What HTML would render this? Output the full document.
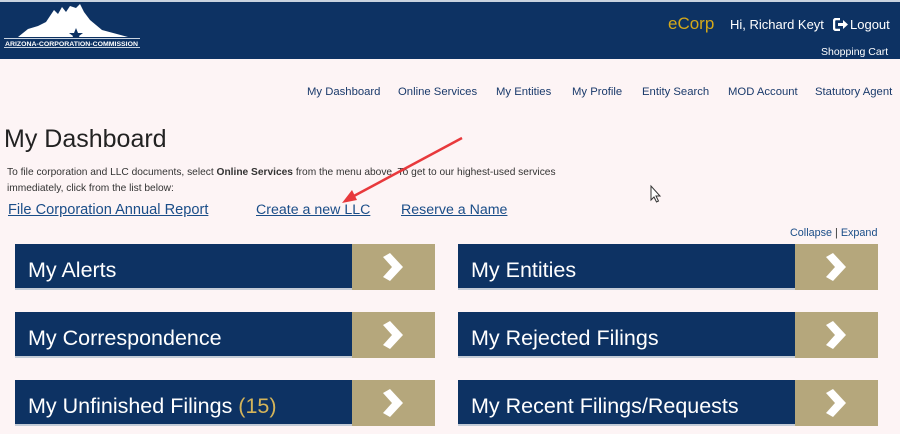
<!DOCTYPE html>
<html><head><meta charset="utf-8"><style>
*{margin:0;padding:0;box-sizing:border-box}
body{width:900px;height:434px;overflow:hidden;background:#fdf4f5;font-family:"Liberation Sans",sans-serif;position:relative}
.hdr{position:absolute;left:0;top:0;width:900px;height:59px;background:#0d3263;border-top:2px solid #c9d3df}
.abs{position:absolute;white-space:nowrap}
.nav{top:86px;font-size:11.3px;color:#1a3a6b}
.tile{position:absolute;height:46px;background:#0d3263;color:#fff;font-size:21.5px;line-height:52px;padding-left:13px;border-bottom:2px solid #c3cbd6}
.tile .g{position:absolute;right:0;top:0;width:83px;height:46px;background:#b5a77c}
.tile svg{position:absolute;left:29px;top:9px}
.lnk{top:202px;font-size:14.6px;color:#1a4d88;text-decoration:underline}
</style></head><body>
<div class="hdr">
<svg class="abs" style="left:4px;top:2px" width="136" height="46" viewBox="0 0 136 46">
<path d="M14 33 L24 25 L34 22 L42 18 L50 6 L54 10 L58 3 L62 8 L66 2 L72 4 L76 0 L80 8 L86 16 L98 26 L124 33 Z" fill="#fff"/>
<path d="M72 24 l2 5 5 0 -4 3 2 5 -5 -3 -5 3 2 -5 -4 -3 5 0z" fill="#0d3263"/>
<rect x="0" y="34" width="136" height="1" fill="#c9d3df"/>
<rect x="0" y="43" width="136" height="1" fill="#c9d3df"/>
<text x="1" y="42" font-size="6.6" fill="#fff" font-family="Liberation Sans" font-weight="bold" textLength="133" lengthAdjust="spacingAndGlyphs">ARIZONA-CORPORATION-COMMISSION</text>
</svg>
<div class="abs" style="left:668px;top:12px;font-size:17px;color:#d4a81a">eCorp</div>
<div class="abs" style="left:730px;top:15px;font-size:13px;color:#fff">Hi, Richard Keyt</div>
<svg class="abs" style="left:833px;top:16px" width="15" height="13" viewBox="0 0 15 13"><path d="M7 1H3a2 2 0 0 0-2 2v7a2 2 0 0 0 2 2h4" stroke="#fff" stroke-width="2.4" fill="none"/><path d="M5 5h5V2l5 4.5-5 4.5V8H5z" fill="#fff"/></svg>
<div class="abs" style="left:850px;top:15px;font-size:13px;color:#fff">Logout</div>
<div class="abs" style="left:821px;top:44px;font-size:10.5px;color:#fff">Shopping Cart</div>
</div>
<div class="abs nav" style="left:307px">My Dashboard</div>
<div class="abs nav" style="left:398px">Online Services</div>
<div class="abs nav" style="left:496px">My Entities</div>
<div class="abs nav" style="left:572px">My Profile</div>
<div class="abs nav" style="left:642px">Entity Search</div>
<div class="abs nav" style="left:728px">MOD Account</div>
<div class="abs nav" style="left:815px">Statutory Agent</div>
<div class="abs" style="left:4px;top:125px;font-size:25px;color:#222">My Dashboard</div>
<div class="abs" style="left:7px;top:165px;font-size:10.2px;color:#333;line-height:16px">To file corporation and LLC documents, select <b>Online Services</b> from the menu above. To get to our highest-used services<br>immediately, click from the list below:</div>
<div class="abs lnk" style="left:8px">File Corporation Annual Report</div>
<div class="abs lnk" style="left:256px;font-size:14.2px">Create a new LLC</div>
<div class="abs lnk" style="left:401px;font-size:14.2px">Reserve a Name</div>
<div class="abs" style="left:790px;top:227px;font-size:10.8px;color:#1a4d88">Collapse <span style="color:#333">|</span> Expand</div>
<div class="tile" style="left:15px;top:244px;width:420px">My Alerts<div class="g"><svg width="24" height="28" viewBox="0 0 24 28"><path d="M2 4l7-4 13 14-13 14-7-4 9-10z" fill="#fff"/></svg></div></div>
<div class="tile" style="left:458px;top:244px;width:420px">My Entities<div class="g"><svg width="24" height="28" viewBox="0 0 24 28"><path d="M2 4l7-4 13 14-13 14-7-4 9-10z" fill="#fff"/></svg></div></div>
<div class="tile" style="left:15px;top:312px;width:420px">My Correspondence<div class="g"><svg width="24" height="28" viewBox="0 0 24 28"><path d="M2 4l7-4 13 14-13 14-7-4 9-10z" fill="#fff"/></svg></div></div>
<div class="tile" style="left:458px;top:312px;width:420px">My Rejected Filings<div class="g"><svg width="24" height="28" viewBox="0 0 24 28"><path d="M2 4l7-4 13 14-13 14-7-4 9-10z" fill="#fff"/></svg></div></div>
<div class="tile" style="left:15px;top:380px;width:420px">My Unfinished Filings <span style="color:#d4b45a">(15)</span><div class="g"><svg width="24" height="28" viewBox="0 0 24 28"><path d="M2 4l7-4 13 14-13 14-7-4 9-10z" fill="#fff"/></svg></div></div>
<div class="tile" style="left:458px;top:380px;width:420px">My Recent Filings/Requests<div class="g"><svg width="24" height="28" viewBox="0 0 24 28"><path d="M2 4l7-4 13 14-13 14-7-4 9-10z" fill="#fff"/></svg></div></div>
<svg class="abs" style="left:0;top:0" width="900" height="434"><line x1="462" y1="138" x2="352" y2="197" stroke="#e8393c" stroke-width="2.5"/><path d="M342 203 L352 190 L357 200 Z" fill="#e8393c"/>
<path d="M651 186 v14 l3-3 2.5 5 2-1-2.5-5 h4z" fill="#fff" stroke="#333" stroke-width="1"/></svg>
</body></html>
